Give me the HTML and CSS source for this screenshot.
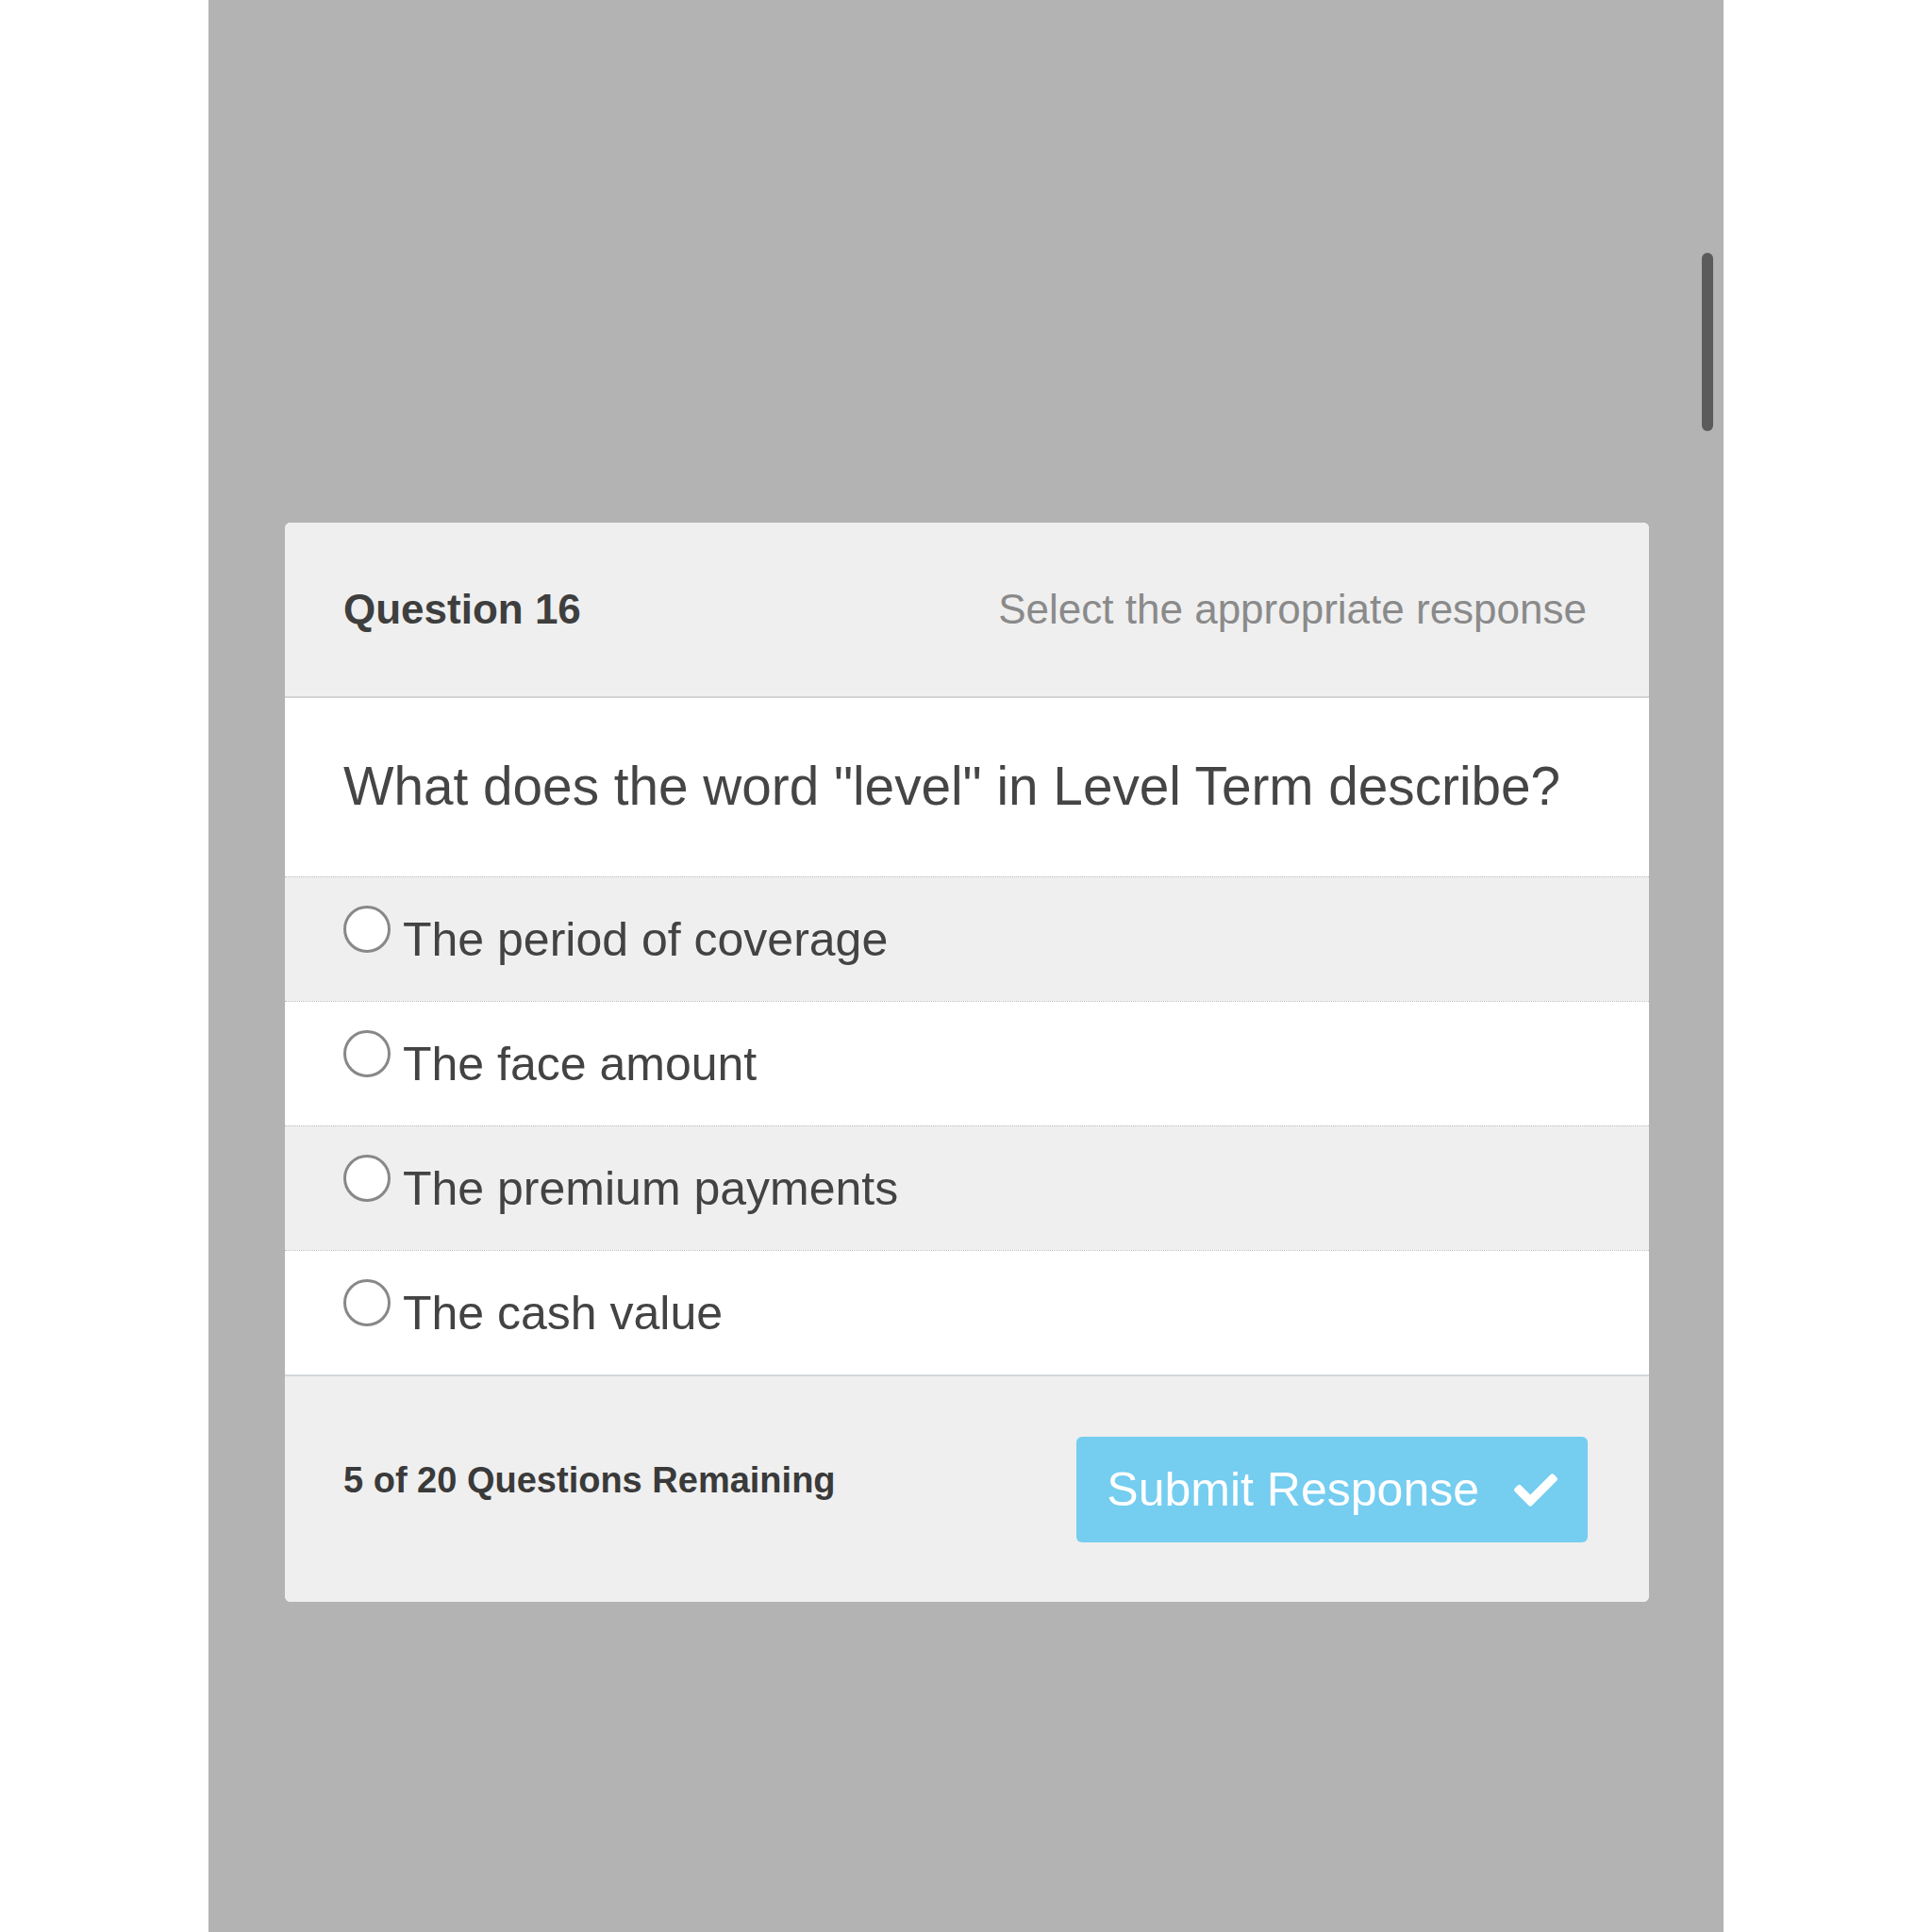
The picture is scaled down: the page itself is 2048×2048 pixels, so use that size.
FILE: index.html
```html
<!DOCTYPE html>
<html>
<head>
    <meta charset="UTF-8">
    <meta name="viewport" content="width=device-width, initial-scale=1.0">
    <title>Question 16</title>
    <link rel="stylesheet" href="styles.css">
</head>
<body>
    <div class="screen">
        <div class="scrollbar"></div>
        <div class="card">
            <div class="card-head">
                <h3 class="qnum">Question 16</h3>
                <span class="hint">Select the appropriate response</span>
            </div>
            <div class="question">What does the word "level" in Level Term describe?</div>
            <ul class="options">
                <li class="option">
                    <input type="radio" name="answer" class="radio">
                    <span class="label">The period of coverage</span>
                </li>
                <li class="option">
                    <input type="radio" name="answer" class="radio">
                    <span class="label">The face amount</span>
                </li>
                <li class="option">
                    <input type="radio" name="answer" class="radio">
                    <span class="label">The premium payments</span>
                </li>
                <li class="option">
                    <input type="radio" name="answer" class="radio">
                    <span class="label">The cash value</span>
                </li>
            </ul>
            <div class="card-foot">
                <span class="remaining">5 of 20 Questions Remaining</span>
                <button class="submit">
                    Submit Response
                    <svg class="check" viewBox="0 64 512 384" width="46" height="35">
                        <path fill="#fff" d="M173.898 439.404l-166.4-166.4c-9.997-9.997-9.997-26.206 0-36.204l36.203-36.204c9.997-9.998 26.207-9.998 36.204 0L192 312.69 432.095 72.596c9.997-9.997 26.207-9.997 36.204 0l36.203 36.204c9.997 9.997 9.997 26.206 0 36.204l-294.4 294.401c-9.998 9.997-26.207 9.997-36.204-.001z"/>
                    </svg>
                </button>
            </div>
        </div>
    </div>
</body>
</html>
```

FILE: styles.css
```css
* {
    padding: 0;
    margin: 0;
    box-sizing: border-box;
}
body {
    background: #fff;
    font-family: "Liberation Sans", Arial, sans-serif;
}
.screen {
    position: relative;
    width: 1606px;
    min-height: 2048px;
    margin-left: 221px;
    background: #b3b3b3;
    padding: 554px 79px 0 81px;
}
.scrollbar {
    position: absolute;
    top: 268px;
    right: 11px;
    width: 12px;
    height: 189px;
    border-radius: 6px;
    background: #5b5b5b;
}
.card {
    width: 1446px;
    background: #fff;
    border-radius: 6px;
    overflow: hidden;
}
.card-head {
    display: flex;
    justify-content: space-between;
    align-items: center;
    background: #efefef;
    border-bottom: 2px solid #d3d3d3;
    padding: 66px 66px 66px 62px;
    line-height: 52px;
    font-size: 44px;
}
.qnum {
    font-size: 44px;
    font-weight: 700;
    color: #3e3e3e;
}
.hint {
    color: #8a8a8a;
}
.question {
    padding: 60px 64px 61px 62px;
    font-size: 56.7px;
    line-height: 68px;
    color: #454545;
}
.options {
    list-style: none;
}
.option {
    display: flex;
    align-items: flex-start;
    gap: 13px;
    padding: 30px 64px 35px 62px;
    border-top: 1px dotted #bdbdbd;
    background: #fff;
}
.option:nth-child(odd) {
    background: #efefef;
}
.option:last-child {
    border-bottom: 2px solid #d3d7db;
}
.radio {
    appearance: none;
    -webkit-appearance: none;
    flex: none;
    width: 50px;
    height: 50px;
    border: 3px solid #888;
    border-radius: 50%;
    background: #fff;
}
.label {
    margin-top: 6px;
    font-size: 50px;
    line-height: 60px;
    color: #434343;
}
.card-foot {
    display: flex;
    justify-content: space-between;
    align-items: center;
    background: #efefef;
    padding: 64px 65px 63px 62px;
}
.remaining {
    margin-bottom: 20px;
    font-size: 38px;
    font-weight: 700;
    color: #3a3a3a;
}
.submit {
    display: flex;
    align-items: center;
    gap: 37px;
    height: 112px;
    padding: 0 32px;
    border: none;
    border-radius: 6px;
    background: #75cdf0;
    color: #fff;
    font-family: "Liberation Sans", Arial, sans-serif;
    font-size: 50px;
    cursor: pointer;
}
.check {
    display: block;
}
```
